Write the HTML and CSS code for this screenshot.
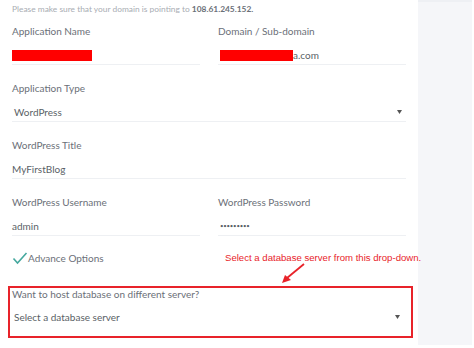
FILE: index.html
```html
<!DOCTYPE html>
<html lang="en">
<head>
    <meta charset="UTF-8">
    <title>Add Application</title>
    <link rel="stylesheet" href="styles.css">
</head>
<body>
<div class="page">
    <div class="form-area">
        <p class="notice">Please make sure that your domain is pointing to <b>108.61.245.152.</b></p>

        <div class="row">
            <div class="field">
                <div class="label">Application Name</div>
                <div class="value"><span class="redact redact-name"></span></div>
            </div>
            <div class="field">
                <div class="label">Domain / Sub-domain</div>
                <div class="value"><span class="redact redact-domain"></span>a.com</div>
            </div>
        </div>

        <div class="field">
            <div class="label">Application Type</div>
            <div class="value select">
                <span class="select-text">WordPress</span>
                <svg class="caret" width="5" height="4" viewBox="0 0 5 4"><path d="M0 0h5L2.5 4z" fill="#555"/></svg>
            </div>
        </div>

        <div class="field">
            <div class="label">WordPress Title</div>
            <div class="value">MyFirstBlog</div>
        </div>

        <div class="row">
            <div class="field">
                <div class="label">WordPress Username</div>
                <div class="value">admin</div>
            </div>
            <div class="field">
                <div class="label">WordPress Password</div>
                <div class="value"><span class="dots">•••••••••</span></div>
            </div>
        </div>

        <div class="advance">
            <svg class="check" width="16" height="13" viewBox="0 0 16 13"><path d="M1.5 6.5l4 4.5 9-10" fill="none" stroke="#45a89e" stroke-width="1.6"/></svg>
            <span>Advance Options</span>
        </div>

        <div class="db-box">
            <div class="label db-label">Want to host database on different server?</div>
            <div class="value select db-select">
                <span class="select-text">Select a database server</span>
                <svg class="caret" width="5" height="4" viewBox="0 0 5 4"><path d="M0 0h5L2.5 4z" fill="#555"/></svg>
            </div>
        </div>

        <div class="annotation">Select a database server from this drop-down.</div>
        <svg class="arrow" width="26" height="22" viewBox="0 0 26 22">
            <path d="M23 1L6 15" stroke="#e8232a" stroke-width="1.8" fill="none"/>
            <path d="M1 20l3-8 6 5z" fill="#e8232a"/>
        </svg>
    </div>
    <div class="side-panel"></div>
</div>
</body>
</html>
```

FILE: styles.css
```css
body {
    margin: 0;
    background: #fff;
    font-family: Lato, "Open Sans", sans-serif;
}
.page {
    display: flex;
    width: 474px;
    height: 348px;
}
.form-area {
    position: relative;
    width: 394px;
    padding: 0 12px;
}
.side-panel {
    width: 54px;
    height: 345px;
    background: #f5f6f9;
    border-top: 2px solid #eef0f4;
    box-sizing: border-box;
}
.notice {
    margin: 3px 0 0;
    font-size: 8.4px;
    line-height: 12px;
    color: #a9adb3;
}
.notice b {
    color: #6b7078;
}
.row {
    display: grid;
    grid-template-columns: 188px 190px;
    gap: 16px;
}
.row .field + .field {
    margin-left: 2px;
}
.field {
    margin-top: 16px;
}
.notice + .row .field {
    margin-top: 9px;
}
.label {
    font-size: 10px;
    line-height: 14px;
    color: #6b7078;
}
.value {
    height: 14px;
    padding: 10px 0 2px;
    border-bottom: 1px solid #eef0f3;
    font-size: 10px;
    line-height: 14px;
    color: #5a5f66;
    display: flex;
    align-items: center;
}
.redact {
    display: inline-block;
    height: 11px;
    background: #f00;
}
.redact-name {
    width: 80px;
}
.redact-domain {
    width: 73px;
    margin-left: 2px;
}
.select {
    justify-content: space-between;
}
.select-text {
    margin-left: 2px;
}
.caret {
    margin-right: 4px;
}
.dots {
    font-size: 6px;
    letter-spacing: -0.2px;
    margin-left: 2px;
}
.advance {
    display: flex;
    align-items: center;
    margin-top: 15px;
    height: 14px;
    font-size: 10px;
    color: #6b7078;
}
.db-box {
    margin: 21px -7px 0 -4px;
    padding: 0 7px 0 2px;
    height: 48px;
    border: 2px solid #e8232a;
}
.db-label {
    line-height: 12px;
}
.db-select {
    padding-top: 10px;
    border-bottom: none;
}
.annotation {
    position: absolute;
    left: 225px;
    top: 251px;
    font-family: "Liberation Sans", Arial, sans-serif;
    font-size: 9.6px;
    line-height: 14px;
    color: #e8232a;
    white-space: nowrap;
}
.arrow {
    position: absolute;
    left: 281px;
    top: 263px;
}
```
